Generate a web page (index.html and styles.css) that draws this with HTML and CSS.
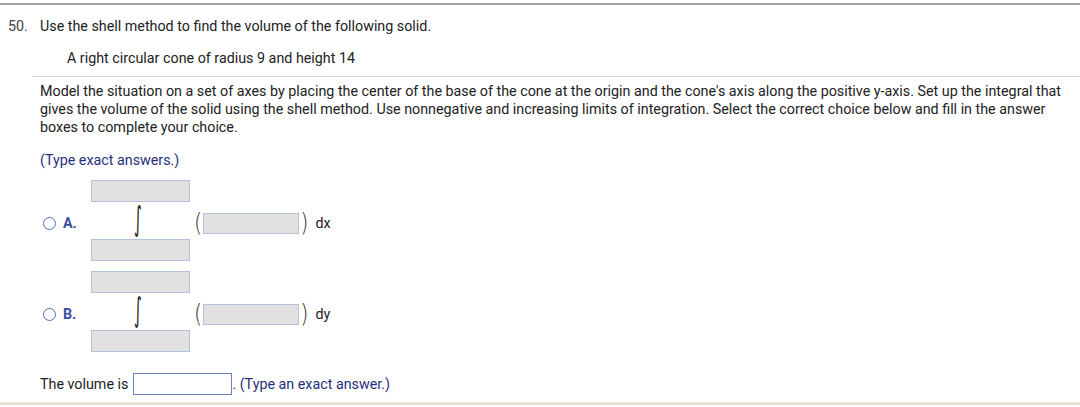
FILE: index.html
```html
<!DOCTYPE html>
<html>
<head>
<meta charset="utf-8">
<link rel="stylesheet" href="styles.css">
</head>
<body>
<div class="page">
  <div class="q-head">
    <span class="num">50.</span>
    <span class="q-text">Use the shell method to find the volume of the following solid.</span>
  </div>
  <div class="given">A right circular cone of radius 9 and height 14</div>
  <div class="sep"></div>
  <div class="body">
    <p class="para">Model the situation on a set of axes by placing the center of the base of the cone at the origin and the cone's axis along the positive y-axis. Set up the integral that gives the volume of the solid using the shell method. Use nonnegative and increasing limits of integration. Select the correct choice below and fill in the answer boxes to complete your choice.</p>
    <p class="hint">(Type exact answers.)</p>

    <div class="opt opt-a">
      <div class="choice"><span class="radio"></span><span class="letter">A.</span></div>
      <div class="box lim-top"></div>
      <div class="integral"><span class="int-glyph">∫</span></div>
      <div class="box lim-bot"></div>
      <div class="expr"><span class="paren">(</span><span class="box inner"></span><span class="paren">)</span><span class="dvar">dx</span></div>
    </div>

    <div class="opt opt-b">
      <div class="choice"><span class="radio"></span><span class="letter">B.</span></div>
      <div class="box lim-top"></div>
      <div class="integral"><span class="int-glyph">∫</span></div>
      <div class="box lim-bot"></div>
      <div class="expr"><span class="paren">(</span><span class="box inner"></span><span class="paren">)</span><span class="dvar">dy</span></div>
    </div>

    <div class="volume">
      <span>The volume is</span>
      <span class="answer"></span>
      <span class="hint-inline">. (Type an exact answer.)</span>
    </div>
  </div>
  <div class="footer-band"></div>
</div>
</body>
</html>
```

FILE: styles.css
```css
html, body {
  margin: 0;
  padding: 0;
  background: #ffffff;
}

body {
  font-family: Roboto, "Liberation Sans", sans-serif;
  font-size: 14.3px;
  line-height: 18px;
  color: #222222;
}

.page {
  margin-top: 3px;
  border-top: 2px solid #a3a3a3;
  height: 402px;
  box-sizing: border-box;
  display: flex;
  flex-direction: column;
}

.q-head {
  display: flex;
  padding-top: 12px;
  padding-left: 8px;
}

.num {
  width: 32px;
  color: #444444;
}

.given {
  margin-top: 14px;
  padding-left: 67px;
}

.sep {
  margin-top: 9px;
  margin-left: 32px;
  border-top: 1px solid #dcdcdc;
}

.body {
  padding-left: 40px;
  padding-right: 12px;
}

.para {
  margin: 5px 0 0 0;
}

.hint {
  margin: 15px 0 0 0;
  color: #27307a;
}

.opt {
  display: grid;
  grid-template-columns: 48px 99px auto;
  grid-template-rows: 22px 37px 22px;
  margin-top: 11px;
  margin-left: 3px;
}

.opt-b {
  margin-top: 10px;
}

.choice {
  grid-column: 1;
  grid-row: 2;
  display: flex;
  align-items: center;
  gap: 7px;
  margin-top: 5px;
}

.radio {
  width: 13px;
  height: 13px;
  box-sizing: border-box;
  border: 1.5px solid #4f72ba;
  border-radius: 50%;
}

.letter {
  font-weight: bold;
  color: #3a4fa2;
}

.box {
  box-sizing: border-box;
  background: #e1e1e1;
  border: 1px solid #b4c1da;
}

.lim-top {
  grid-column: 2;
  grid-row: 1;
  height: 22px;
}

.lim-bot {
  grid-column: 2;
  grid-row: 3;
  height: 22px;
}

.integral {
  grid-column: 2;
  grid-row: 2;
  display: flex;
  align-items: center;
  justify-content: center;
  padding-right: 6px;
  overflow: visible;
}

.int-glyph {
  display: inline-block;
  font-family: "DejaVu Sans", sans-serif;
  font-size: 30px;
  line-height: 30px;
  font-weight: normal;
  color: #222222;
  transform: translateY(-2px) scale(0.5, 1.1);
}

.expr {
  grid-column: 3;
  grid-row: 2;
  display: flex;
  align-items: center;
  margin-left: 4px;
  margin-top: 5px;
}

.paren {
  font-family: "DejaVu Sans", sans-serif;
  font-size: 21px;
  font-weight: 200;
  line-height: 22px;
  color: #333333;
  display: inline-block;
  transform: scaleY(1.15);
}

.inner {
  width: 96px;
  height: 21px;
  margin: 0 1px;
}

.dvar {
  margin-left: 7px;
}

.volume {
  display: flex;
  align-items: center;
  margin-top: 21px;
}

.answer {
  width: 99px;
  height: 22px;
  box-sizing: border-box;
  border: 1px solid #6a84b3;
  background: #ffffff;
  margin-left: 5px;
}

.hint-inline {
  color: #27307a;
}

.footer-band {
  margin-top: auto;
  height: 3px;
  background: #e9e3d6;
}
```
